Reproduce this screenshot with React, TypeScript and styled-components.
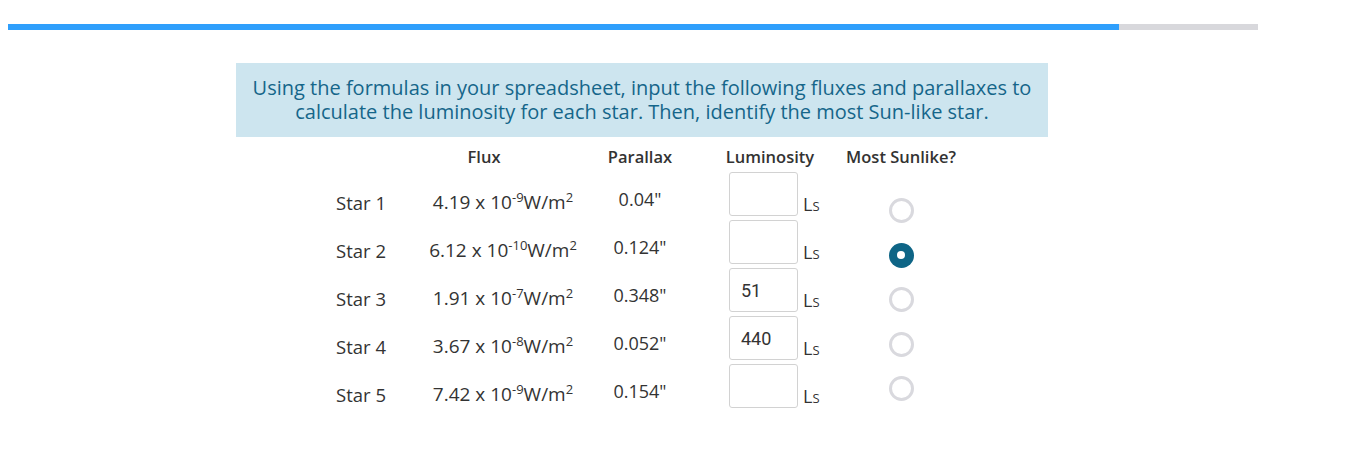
import React from "react";
import styled, { createGlobalStyle } from "styled-components";

interface Star {
    name: string;
    mantissa: string;
    exponent: string;
    parallax: string;
    luminosity: string;
}

const stars: Star[] = [
    { name: "Star 1", mantissa: "4.19", exponent: "-9", parallax: "0.04\"", luminosity: "" },
    { name: "Star 2", mantissa: "6.12", exponent: "-10", parallax: "0.124\"", luminosity: "" },
    { name: "Star 3", mantissa: "1.91", exponent: "-7", parallax: "0.348\"", luminosity: "51" },
    { name: "Star 4", mantissa: "3.67", exponent: "-8", parallax: "0.052\"", luminosity: "440" },
    { name: "Star 5", mantissa: "7.42", exponent: "-9", parallax: "0.154\"", luminosity: "" },
];

const GlobalStyle = createGlobalStyle`
    body{
        margin: 8px;
        background: #ffffff;
        font-family: "Open Sans", "Noto Sans", sans-serif;
        color: #333333;
    }
`;

const App: React.FC = () => {
    const [selected, setSelected] = React.useState(1);
    const progress = 88.9;

    return (
        <>
            <GlobalStyle />
            <ProgressTrack>
                <ProgressFill style={{ width: `${progress}%` }} />
            </ProgressTrack>
            <Main>
                <Prompt>
                    Using the formulas in your spreadsheet, input the following fluxes and parallaxes to
                    calculate the luminosity for each star. Then, identify the most Sun-like star.
                </Prompt>
                <Table>
                    <DataGrid>
                        <HeaderCell />
                        <HeaderCell>Flux</HeaderCell>
                        <HeaderCell>Parallax</HeaderCell>
                        <HeaderCell>Luminosity</HeaderCell>
                        {stars.map((s) => (
                            <React.Fragment key={s.name}>
                                <LabelCell>{s.name}</LabelCell>
                                <FluxCell>
                                    <span>
                                        {s.mantissa} x 10<Sup>{s.exponent}</Sup>W/m<Sup>2</Sup>
                                    </span>
                                </FluxCell>
                                <ParallaxCell>{s.parallax}</ParallaxCell>
                                <LuminosityCell>
                                    <Input defaultValue={s.luminosity} />
                                    <Unit>
                                        L<small>S</small>
                                    </Unit>
                                </LuminosityCell>
                            </React.Fragment>
                        ))}
                    </DataGrid>
                    <RadioColumn>
                        <HeaderCell>Most Sunlike?</HeaderCell>
                        <RadioList>
                            {stars.map((s, i) => (
                                <Radio
                                    key={s.name}
                                    $checked={selected === i}
                                    onClick={() => setSelected(i)}
                                    aria-label={s.name}
                                />
                            ))}
                        </RadioList>
                    </RadioColumn>
                </Table>
            </Main>
        </>
    );
};

const ProgressTrack = styled.div`
    margin-top: 16px;
    width: 1250px;
    height: 6px;
    background: #d8d8dc;
`;

const ProgressFill = styled.div`
    height: 100%;
    background: #2f9ffc;
`;

const Main = styled.main`
    margin: 33px 0 0 228px;
    width: 812px;
`;

const Prompt = styled.p`
    margin: 0;
    padding: 13px 10px;
    background: #cde5ef;
    color: #15668a;
    font-size: 20px;
    line-height: 24px;
    text-align: center;
`;

const Table = styled.div`
    display: flex;
`;

const DataGrid = styled.div`
    display: grid;
    grid-template-columns: 160px 176px 136px 124px;
    grid-template-rows: 34px;
    grid-auto-rows: 48px;
`;

const HeaderCell = styled.div`
    height: 34px;
    box-sizing: border-box;
    padding-top: 9px;
    font-size: 16.5px;
    font-weight: 600;
    line-height: 22px;
    color: #333333;
    text-align: center;
    white-space: nowrap;
`;

const BodyCell = styled.div`
    display: flex;
    align-items: flex-end;
    justify-content: center;
    font-size: 18px;
    line-height: 24px;
    white-space: nowrap;
`;

const LabelCell = styled(BodyCell)`
    justify-content: flex-end;
    padding: 0 10px 4px 0;
    font-size: 18.5px;
`;

const FluxCell = styled(BodyCell)`
    padding: 0 0 5px 38px;
    font-size: 19px;
`;

const ParallaxCell = styled(BodyCell)`
    padding-bottom: 8px;
`;

const Sup = styled.sup`
    font-size: 13px;
    line-height: 0;
    vertical-align: 7px;
`;

const LuminosityCell = styled.div`
    display: flex;
    align-items: flex-start;
    padding: 1px 0 0 21px;
`;

const Input = styled.input`
    box-sizing: border-box;
    width: 69px;
    height: 44px;
    padding: 0 0 0 11px;
    border: 1px solid #d2d2d2;
    border-radius: 3px;
    font-family: Roboto, "Liberation Sans", sans-serif;
    font-size: 18px;
    color: #333333;
    outline: none;
`;

const Unit = styled.span`
    align-self: flex-end;
    margin: 0 0 4px 5px;
    font-size: 18px;
    line-height: 18px;
    color: #333333;
    small{
        font-size: 13px;
    }
`;

const RadioColumn = styled.div`
    width: 138px;
    display: flex;
    flex-direction: column;
`;

const RadioList = styled.div`
    display: flex;
    flex-direction: column;
    align-items: center;
    gap: 19.5px;
    padding-top: 27px;
`;

const Radio = styled.button<{ $checked: boolean }>`
    position: relative;
    width: 25px;
    height: 25px;
    padding: 0;
    border-radius: 50%;
    cursor: pointer;
    box-sizing: border-box;
    border: ${(p) => (p.$checked ? "none" : "3px solid #d9d9de")};
    background: ${(p) => (p.$checked ? "#0e6586" : "#ffffff")};
    &::after{
        content: "";
        display: ${(p) => (p.$checked ? "block" : "none")};
        position: absolute;
        left: 50%;
        top: 50%;
        width: 8px;
        height: 8px;
        margin: -4px 0 0 -4px;
        border-radius: 50%;
        background: #ffffff;
    }
`;

export default App;
